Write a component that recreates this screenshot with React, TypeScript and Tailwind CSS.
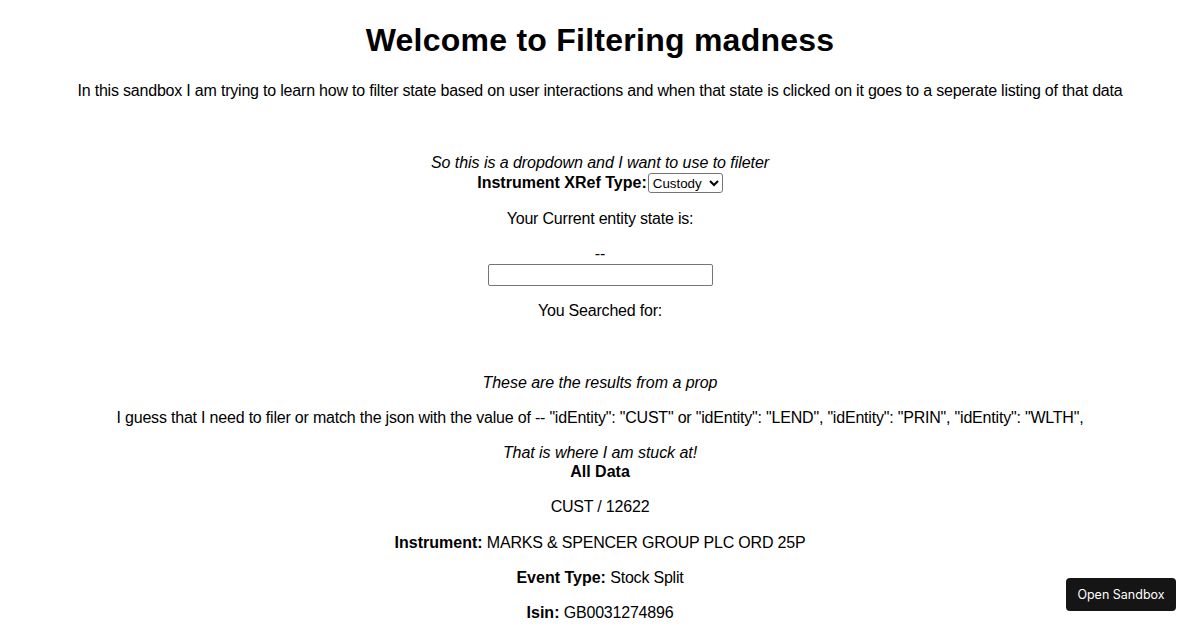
import { useState } from "react";

const App = () => {
  const [type, setType] = useState("CUST");
  const [search, setSearch] = useState("");

  return (
    <div className="min-h-screen bg-white text-black font-['Liberation_Sans',Arial,sans-serif] text-[16px] leading-[1.2] tracking-[-0.2px] text-center">
      <h1 className="pt-[21.44px] text-[32px] font-bold tracking-[0.25px]">Welcome to Filtering madness</h1>
      <p className="mt-[21.44px]">
        In this sandbox I am trying to learn how to filter state based on user interactions and when that state is clicked on it goes to a seperate listing of that data
      </p>

      <div className="mt-[53px]">
        <em className="block tracking-[-0.05px]">So this is a dropdown and I want to use to fileter</em>
        <label className="font-bold tracking-normal">Instrument XRef Type:</label>
        <select
          value={type}
          onChange={e => setType(e.target.value)}
          className="text-[13.33px] font-normal tracking-normal border border-[#767676] rounded-[3px] bg-white h-[20px] w-[75px] ml-[1px] align-baseline"
        >
          <option value="CUST">Custody</option>
          <option value="LEND">Lending</option>
          <option value="PRIN">Principal</option>
          <option value="WLTH">Wealth</option>
        </select>
        <p className="mt-[16px]">Your Current entity state is:</p>
        <div className="mt-[16px]">--</div>
        <div>
          <input
            value={search}
            onChange={e => setSearch(e.target.value)}
            className="w-[225px] h-[22px] border border-[#767676] rounded-[2px] bg-white px-[2px] text-[13.33px] align-top"
          />
        </div>
        <p className="mt-[15px]">You Searched for: {search}</p>
      </div>

      <div className="mt-[53px]">
        <em className="block tracking-[-0.05px]">These are the results from a prop</em>
        <p className="mt-[16px]">
          I guess that I need to filer or match the json with the value of -- "idEntity": "CUST" or "idEntity": "LEND", "idEntity": "PRIN", "idEntity": "WLTH",
        </p>
        <em className="block mt-[16px] tracking-[-0.05px]">That is where I am stuck at!</em>
        <h3 className="font-bold tracking-normal">All Data</h3>
        <p className="mt-[16px]">CUST / 12622</p>
        <p className="mt-[16px]"><b className="tracking-normal">Instrument:</b> MARKS &amp; SPENCER GROUP PLC ORD 25P</p>
        <p className="mt-[16px]"><b className="tracking-normal">Event Type:</b> Stock Split</p>
        <p className="mt-[16px]"><b className="tracking-normal">Isin:</b> GB0031274896</p>
      </div>

      <button className="fixed right-[24px] bottom-[19px] w-[110px] h-[33px] rounded-[4px] bg-[#151515] text-white text-[12.5px] tracking-normal font-['Inter',sans-serif]">
        Open Sandbox
      </button>
    </div>
  );
};

export default App;
